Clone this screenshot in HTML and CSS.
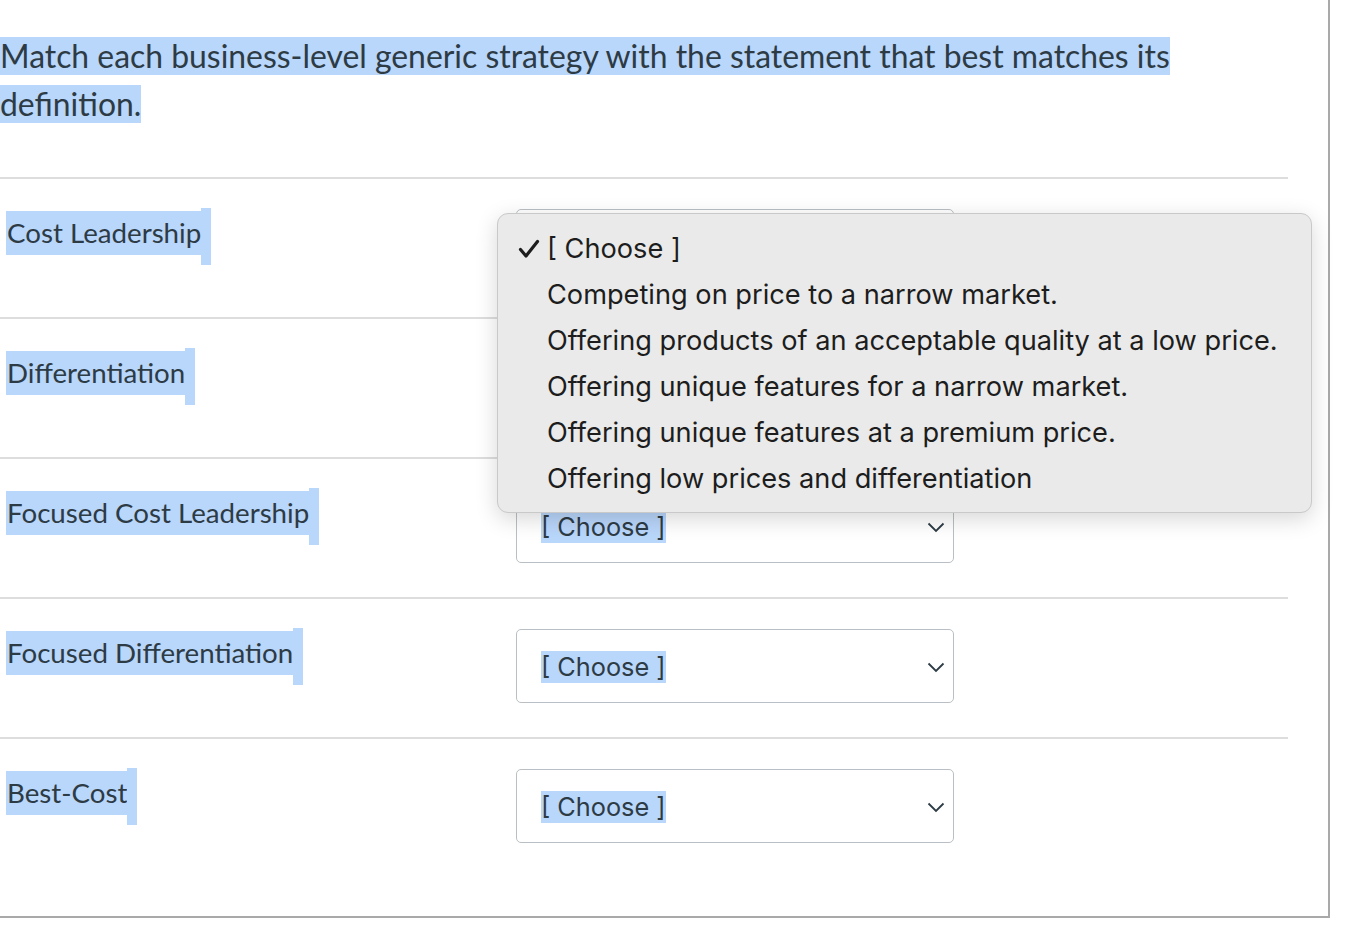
FILE: index.html
```html
<!DOCTYPE html>
<html lang="en">
<head>
    <meta charset="UTF-8">
    <meta name="viewport" content="width=device-width, initial-scale=1.0">
    <title>Matching Question</title>
    <link rel="stylesheet" href="styles.css">
</head>
<body>
    <div class="quiz">
        <div class="question">
            <span class="sel">Match each business-level generic strategy with the statement that best matches its definition.</span>
        </div>

        <div class="answers">
            <div class="answer-row">
                <div class="answer-label"><span class="sel">Cost Leadership</span><span class="sel-tail"></span></div>
                <div class="answer-select">
                    <div class="select-box">
                        <span class="sel">[ Choose ]</span>
                        <svg class="chevron" width="18" height="11" viewBox="0 0 18 11"><polyline points="1.5,1.5 9,9 16.5,1.5" fill="none" stroke="#2d3b45" stroke-width="1.8"/></svg>
                    </div>
                    <ul class="dropdown">
                        <li class="checked"><span class="check"><svg width="22" height="20" viewBox="0 0 22 20"><polyline points="2.5,10.5 8,17 19.5,2.5" fill="none" stroke="#1d1d1d" stroke-width="3.2" stroke-linejoin="round" stroke-linecap="round"/></svg></span>[ Choose ]</li>
                        <li><span class="check"></span>Competing on price to a narrow market.</li>
                        <li><span class="check"></span>Offering products of an acceptable quality at a low price.</li>
                        <li><span class="check"></span>Offering unique features for a narrow market.</li>
                        <li><span class="check"></span>Offering unique features at a premium price.</li>
                        <li><span class="check"></span>Offering low prices and differentiation</li>
                    </ul>
                </div>
            </div>

            <div class="answer-row">
                <div class="answer-label"><span class="sel">Differentiation</span><span class="sel-tail"></span></div>
                <div class="answer-select">
                    <div class="select-box">
                        <span class="sel">[ Choose ]</span>
                        <svg class="chevron" width="18" height="11" viewBox="0 0 18 11"><polyline points="1.5,1.5 9,9 16.5,1.5" fill="none" stroke="#2d3b45" stroke-width="1.8"/></svg>
                    </div>
                </div>
            </div>

            <div class="answer-row">
                <div class="answer-label"><span class="sel">Focused Cost Leadership</span><span class="sel-tail"></span></div>
                <div class="answer-select">
                    <div class="select-box">
                        <span class="sel">[ Choose ]</span>
                        <svg class="chevron" width="18" height="11" viewBox="0 0 18 11"><polyline points="1.5,1.5 9,9 16.5,1.5" fill="none" stroke="#2d3b45" stroke-width="1.8"/></svg>
                    </div>
                </div>
            </div>

            <div class="answer-row">
                <div class="answer-label"><span class="sel">Focused Differentiation</span><span class="sel-tail"></span></div>
                <div class="answer-select">
                    <div class="select-box">
                        <span class="sel">[ Choose ]</span>
                        <svg class="chevron" width="18" height="11" viewBox="0 0 18 11"><polyline points="1.5,1.5 9,9 16.5,1.5" fill="none" stroke="#2d3b45" stroke-width="1.8"/></svg>
                    </div>
                </div>
            </div>

            <div class="answer-row">
                <div class="answer-label"><span class="sel">Best-Cost</span><span class="sel-tail"></span></div>
                <div class="answer-select">
                    <div class="select-box">
                        <span class="sel">[ Choose ]</span>
                        <svg class="chevron" width="18" height="11" viewBox="0 0 18 11"><polyline points="1.5,1.5 9,9 16.5,1.5" fill="none" stroke="#2d3b45" stroke-width="1.8"/></svg>
                    </div>
                </div>
            </div>
        </div>
    </div>
</body>
</html>
```

FILE: styles.css
```css
body {
    margin: 0;
    background-color: #ffffff;
    font-family: Lato, "Liberation Sans", sans-serif;
    color: #2d3b45;
}

.quiz {
    width: 1288px;
    padding: 32px 40px 39px 0;
    border-right: 2px solid #a9a9a9;
    border-bottom: 2px solid #a9a9a9;
}

.sel {
    background-color: #b9d6fb;
}

.question {
    font-size: 31.9px;
    line-height: 48px;
    width: 1200px;
}

.answers {
    margin-top: 49px;
}

.answer-row {
    display: flex;
    align-items: flex-start;
    border-top: 2px solid #dddddd;
    padding: 30px 0 34px 0;
}

.answer-label {
    width: 510px;
    margin-left: 6px;
    display: flex;
    align-items: flex-start;
    font-size: 27.7px;
}

.answer-label .sel {
    display: block;
    line-height: 44px;
    margin-top: 2px;
    padding-left: 1px;
}

.sel-tail {
    display: block;
    width: 10px;
    height: 57px;
    background-color: #b9d6fb;
    margin-top: -1px;
}

.answer-select {
    position: relative;
}

.select-box {
    box-sizing: border-box;
    width: 438px;
    height: 74px;
    border: 1px solid #b9bfc4;
    border-radius: 5px;
    display: flex;
    align-items: center;
    justify-content: space-between;
    padding: 2px 8px 0 24px;
    font-family: Inter, "Liberation Sans", sans-serif;
    font-size: 25.3px;
    color: #2d3b45;
}

.select-box .sel {
    line-height: 32px;
}

.chevron {
    display: block;
}

/* open native-style option list over the first select */
.dropdown {
    position: absolute;
    z-index: 10;
    left: -19px;
    top: 4px;
    width: 815px;
    box-sizing: border-box;
    margin: 0;
    padding: 12px 0 10px 0;
    list-style: none;
    background-color: #e9eae9;
    border: 1px solid #c9c9c9;
    border-radius: 11px;
    box-shadow: 0 6px 22px rgba(0, 0, 0, 0.16);
    font-family: Inter, "Liberation Sans", sans-serif;
    font-size: 27.2px;
    line-height: 46px;
    color: #1d1d1d;
    white-space: nowrap;
}

.dropdown li {
    display: flex;
    align-items: center;
    padding-left: 20px;
}

.check {
    display: inline-flex;
    align-items: center;
    width: 29px;
    height: 46px;
}
```
